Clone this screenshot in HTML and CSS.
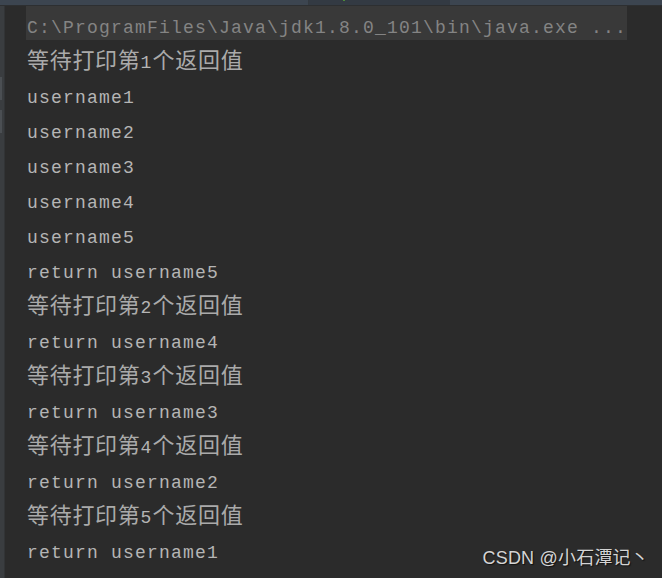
FILE: index.html
```html
<!DOCTYPE html>
<html lang="zh-CN">
<head>
<meta charset="utf-8">
<title>Console</title>
<link rel="stylesheet" href="styles.css">
</head>
<body>
<div class="tabs">
  <div class="tab tab-a"></div>
  <div class="tab tab-b"><span class="dot"></span></div>
  <div class="tab tab-c"></div>
</div>
<div class="main">
  <div class="gutter">
    <span class="gbtn gbtn-1"></span>
    <span class="gbtn gbtn-2"></span>
  </div>
  <div class="console">
    <div class="cmd">C:\ProgramFiles\Java\jdk1.8.0_101\bin\java.exe ...</div>
    <div class="out">
      <div class="line"><span class="cn">等待打印第</span>1<span class="cn">个返回值</span></div>
      <div class="line">username1</div>
      <div class="line">username2</div>
      <div class="line">username3</div>
      <div class="line">username4</div>
      <div class="line">username5</div>
      <div class="line">return username5</div>
      <div class="line"><span class="cn">等待打印第</span>2<span class="cn">个返回值</span></div>
      <div class="line">return username4</div>
      <div class="line"><span class="cn">等待打印第</span>3<span class="cn">个返回值</span></div>
      <div class="line">return username3</div>
      <div class="line"><span class="cn">等待打印第</span>4<span class="cn">个返回值</span></div>
      <div class="line">return username2</div>
      <div class="line"><span class="cn">等待打印第</span>5<span class="cn">个返回值</span></div>
      <div class="line">return username1</div>
    </div>
  </div>
</div>
<div class="watermark">CSDN @小石潭记丶</div>
</body>
</html>
```

FILE: styles.css
```css
html, body {
  margin: 0;
  padding: 0;
}
body {
  width: 662px;
  height: 578px;
  overflow: hidden;
  background: #2b2b2b;
  position: relative;
  font-family: "Liberation Mono", monospace;
}
.tabs {
  display: flex;
  height: 5px;
  border-bottom: 1px solid #2d2f31;
}
.tab-a {
  width: 308px;
  background: #3c4550;
  border-right: 1px solid #33393f;
}
.tab-b {
  width: 141px;
  background: #333a43;
  position: relative;
}
.tab-c {
  flex: 1;
  background: #3c4550;
}
.dot {
  position: absolute;
  left: 34px;
  top: 0;
  width: 2px;
  height: 1px;
  background: #4c8a3a;
}
.main {
  display: flex;
}
.gutter {
  width: 5px;
  height: 572px;
  background: #3a3d40;
  border-right: 1px solid #323436;
  display: flex;
  flex-direction: column;
  padding-top: 71px;
  box-sizing: border-box;
  gap: 10px;
}
.gbtn {
  display: block;
  width: 2px;
  height: 23px;
  background: #4b4f53;
}
.console {
  margin-left: 21px;
  flex: 1;
}
.cmd {
  width: 601px;
  height: 34px;
  box-sizing: border-box;
  padding: 5px 0 0 1px;
  line-height: 35px;
  background: #393939;
  color: #848484;
  font-size: 18px;
  letter-spacing: 1.2px;
  white-space: nowrap;
}
.out {
  margin-top: 6px;
  padding-left: 1px;
  color: #b5b5b5;
  font-size: 18px;
  letter-spacing: 1.2px;
}
.line {
  height: 35px;
  line-height: 35px;
  white-space: nowrap;
}
.cn {
  font-family: "Noto Sans CJK SC", sans-serif;
  font-size: 22px;
  line-height: 20px;
  letter-spacing: 0.7px;
  color: #aaaaaa;
}
.watermark {
  position: absolute;
  right: 13px;
  bottom: 9px;
  font-family: "Liberation Sans", "Noto Sans CJK SC", sans-serif;
  font-size: 18px;
  letter-spacing: 0.2px;
  color: #d4d4d4;
  text-shadow: 1px 1px 1px #111;
  white-space: nowrap;
}
```
